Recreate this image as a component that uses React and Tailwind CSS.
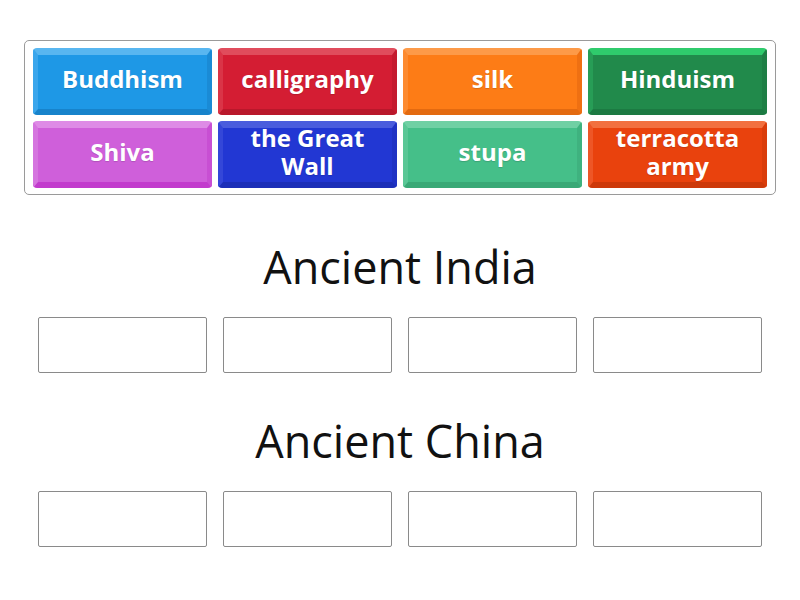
const tiles = [
  { label: "Buddhism", cls: "bg-[#1e98e6] border-t-[#58b6f0] border-l-[#3aa6ec] border-r-[#1a8bd6] border-b-[#1783cb]" },
  { label: "calligraphy", cls: "bg-[#d41d33] border-t-[#e04c5c] border-l-[#da3447] border-r-[#c41a2e] border-b-[#b9182b]" },
  { label: "silk", cls: "bg-[#fd7c16] border-t-[#fd9a48] border-l-[#fd8b30] border-r-[#ef7012] border-b-[#e36a10]" },
  { label: "Hinduism", cls: "bg-[#218a4b] border-t-[#2fcb6c] border-l-[#279d56] border-r-[#1e7f45] border-b-[#1c7a42]" },
  { label: "Shiva", cls: "bg-[#cf5fda] border-t-[#de8be6] border-l-[#d575df] border-r-[#c84fd3] border-b-[#c23bcd]" },
  { label: "the Great Wall", cls: "bg-[#2237d3] border-t-[#4a5cdd] border-l-[#3447d8] border-r-[#1f32c4] border-b-[#1c2fb8]" },
  { label: "stupa", cls: "bg-[#45bf89] border-t-[#70d0a4] border-l-[#5ac796] border-r-[#3fb27f] border-b-[#3aa977]" },
  { label: "terracotta army", cls: "bg-[#e9420d] border-t-[#f2703f] border-l-[#ee5626] border-r-[#da3d0b] border-b-[#cd390a]" },
];

function Tile({ label, cls }) {
  return (
    <div
      className={`h-[67px] rounded-[4px] border-t-[7px] border-x-[5px] border-b-[6px] flex items-center justify-center text-center text-white font-bold text-[24px] leading-[28px] px-1 ${cls}`}
      style={{ textShadow: "0 1px 1px rgba(0,0,0,0.15)" }}
    >
      <span className="max-w-[150px] mb-[6px]">{label}</span>
    </div>
  );
}

function DropRow() {
  return (
    <div className="mx-[38px] grid grid-cols-4 gap-4">
      {[0, 1, 2, 3].map((i) => (
        <div key={i} className="h-[56px] border border-[#8a8a8a] rounded-[2px] bg-white" />
      ))}
    </div>
  );
}

export default function App() {
  return (
    <div className="w-[800px] h-[600px] bg-white font-['Open_Sans',sans-serif] overflow-hidden">
      <div className="pt-[40px] px-6">
        <div className="border border-[#9a9a9a] rounded-[5px] pt-[7px] pb-[6px] px-2 grid grid-cols-4 gap-[6px]">
          {tiles.map((t) => (
            <Tile key={t.label} {...t} />
          ))}
        </div>
      </div>

      <h2 className="mt-[50px] text-center text-[45px] leading-[44px] text-[#111] font-normal">Ancient India</h2>
      <div className="mt-[28px]">
        <DropRow />
      </div>

      <h2 className="mt-[46px] text-center text-[45px] leading-[44px] text-[#111] font-normal">Ancient China</h2>
      <div className="mt-[28px]">
        <DropRow />
      </div>
    </div>
  );
}
